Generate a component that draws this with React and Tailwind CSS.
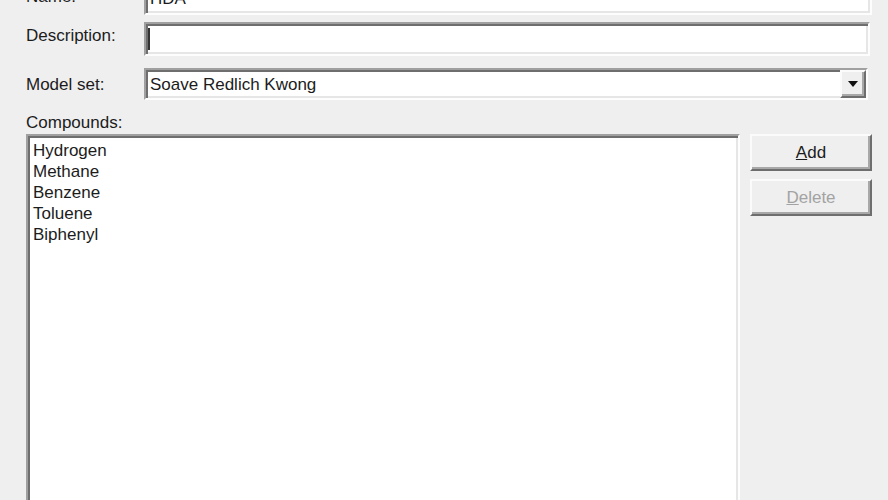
import React from 'react';

const sunken = 'bg-white border-2 border-t-[#a0a0a0] border-l-[#a0a0a0] border-b-[#fdfdfd] border-r-[#fdfdfd] shadow-[inset_2px_2px_0_#6e6e6e,inset_-2px_-2px_0_#e6e6e6]';
const raised = 'bg-[#efefef] border-2 border-t-[#fbfbfb] border-l-[#fbfbfb] border-b-[#6e6e6e] border-r-[#6e6e6e] shadow-[inset_-2px_-2px_0_#a8a8a8]';

const COMPOUNDS = ['Hydrogen', 'Methane', 'Benzene', 'Toluene', 'Biphenyl'];

function Row({ label, children, className = '', labelClass = '' }) {
  return (
    <div className={`flex items-center ${className}`}>
      <div className={`w-[118px] shrink-0 text-[#1c1c1c] ${labelClass}`}>{label}</div>
      {children}
    </div>
  );
}

export default function App() {
  return (
    <div
      className="w-[888px] h-[500px] overflow-hidden bg-[#efefef] text-[17px] leading-[21px] text-[#1c1c1c]"
      style={{ fontFamily: '"Liberation Sans", Arial, sans-serif' }}
    >
      <div className="pl-[26px] pr-[16px] -mt-[19px] flex flex-col">
        <Row label="Name:" className="h-[34px]" labelClass="-mt-[4px]">
          <div className={`${sunken} flex-1 h-[34px] flex items-center pl-[4px]`}>HDA</div>
        </Row>

        <Row label="Description:" className="h-[34px] mt-[7px]" labelClass="-mt-[8px]">
          <div className={`${sunken} flex-1 h-[34px] flex items-center pl-[2px] mr-[2px]`}>
            <div className="w-[2px] h-[22px] bg-[#333]" />
          </div>
        </Row>

        <Row label="Model set:" className="h-[32px] mt-[12px]" labelClass="mt-[1px]">
          <div className={`${sunken} flex-1 h-[32px] flex items-center pl-[4px] mr-[4px]`}>
            <span className="flex-1">Soave Redlich Kwong</span>
            <div className={`${raised} w-[26px] h-[28px] flex items-center justify-center`}>
              <svg width="10" height="6" viewBox="0 0 10 6">
                <path d="M0 0h10L5 6z" fill="#111" />
              </svg>
            </div>
          </div>
        </Row>

        <div className="mt-[12px] h-[21px]">Compounds:</div>

        <div className="flex mt-[1px] gap-[10px]">
          <div className={`${sunken} w-[714px] h-[400px] pt-[4px] pl-[5px]`}>
            {COMPOUNDS.map((c) => (
              <div key={c} className="h-[21px]">{c}</div>
            ))}
          </div>

          <div className="flex flex-col gap-[8px] w-[122px]">
            <button className={`${raised} h-[37px] flex items-center justify-center`}>
              <span><span className="underline">A</span>dd</span>
            </button>
            <button disabled className={`${raised} h-[37px] flex items-center justify-center text-[#a3a3a3]`}>
              <span><span className="underline">D</span>elete</span>
            </button>
          </div>
        </div>
      </div>
    </div>
  );
}
